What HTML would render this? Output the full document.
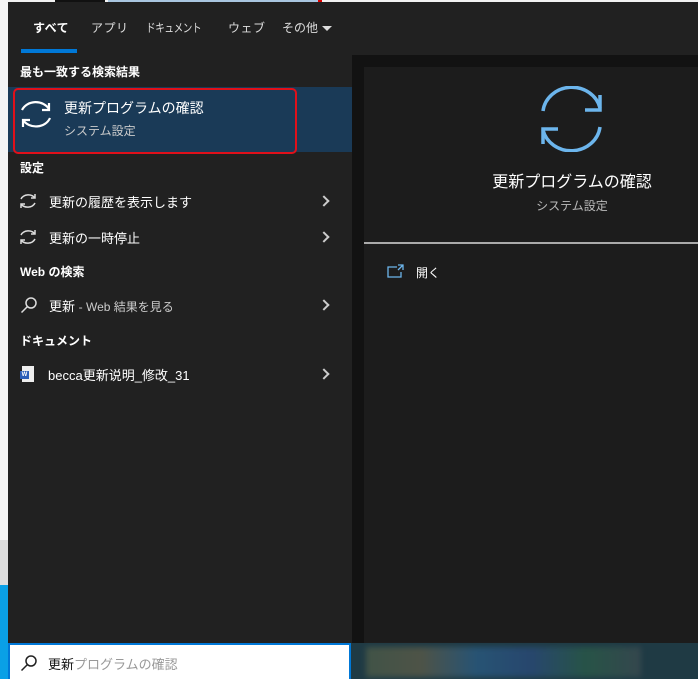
<!DOCTYPE html>
<html><head><meta charset="utf-8"><style>
*{margin:0;padding:0;box-sizing:border-box}
body{width:698px;height:679px;position:relative;overflow:hidden;background:#f2f2f2;font-family:"Liberation Sans","Noto Sans CJK JP",sans-serif;color:#fff}
.a{position:absolute}
.t{font-size:12px;color:#ddd}
.hd{font-size:12px;font-weight:bold;color:#fff}
.it{font-size:13px;color:#fff}
.chev{position:absolute;left:320px;width:8px;height:8px;border-right:2px solid #ccc;border-top:2px solid #ccc;transform:rotate(45deg)}
</style></head><body>
<div class="a" style="left:0;top:0;width:8px;height:679px;background:#f4f4f4"></div>
<div class="a" style="left:0;top:540px;width:8px;height:45px;background:#ddd"></div>
<div class="a" style="left:0;top:585px;width:8px;height:94px;background:#0aa0e6"></div>
<div class="a" style="left:55px;top:0;width:50px;height:3px;background:#111"></div>
<div class="a" style="left:108px;top:0;width:210px;height:3px;background:#a9c6e0"></div>
<div class="a" style="left:318px;top:0;width:4px;height:3px;background:#d00"></div>
<div class="a" style="left:8px;top:2px;width:690px;height:641px;background:#212121"></div>
<div class="a" style="left:352px;top:55px;width:346px;height:588px;background:#121212"></div>
<div class="a" style="left:364px;top:67px;width:334px;height:576px;background:#1c1c1c"></div>
<!-- tabs -->
<div class="a t" style="left:33px;top:19px;color:#fff;font-weight:bold;letter-spacing:0.5px">すべて</div>
<div class="a t" style="left:91px;top:19px;letter-spacing:0.5px">アプリ</div>
<div class="a t" style="left:146px;top:19px;letter-spacing:-0.5px;transform:scaleX(0.8);transform-origin:left">ドキュメント</div>
<div class="a t" style="left:146px;top:19px;letter-spacing:-0.3px;display:none">ドキュメント</div>
<div class="a t" style="left:228px;top:19px;letter-spacing:0.5px">ウェブ</div>
<div class="a t" style="left:282px;top:19px">その他</div>
<div class="a" style="left:322px;top:26px;border-left:5px solid transparent;border-right:5px solid transparent;border-top:5px solid #ddd"></div>
<div class="a" style="left:21px;top:49px;width:56px;height:4px;background:#0078d7"></div>
<div class="a hd" style="left:20px;top:63px">最も一致する検索結果</div>
<div class="a" style="left:8px;top:87px;width:344px;height:65px;background:#1a3a57"></div>
<div class="a" style="left:13px;top:88px;width:284px;height:66px;border:2px solid #e0101a;border-radius:5px"></div>
<svg class="a" style="left:19px;top:98px" width="34" height="34" viewBox="0 0 34 34" fill="none" stroke="#fff" stroke-width="2.2"><path d="M3 12 A15 13 0 0 1 30 11"/><path d="M31 20 A15 13 0 0 1 4 22"/><path d="M30 5 V12 H23" /><path d="M4 29 V22 H11"/></svg>
<div class="a" style="left:64px;top:98px;font-size:14px">更新プログラムの確認</div>
<div class="a" style="left:64px;top:122px;font-size:12px;color:#ccc">システム設定</div>
<div class="a hd" style="left:20px;top:159px">設定</div>
<svg class="a" style="left:19px;top:192px" width="18" height="18" viewBox="0 0 18 18" fill="none" stroke="#ddd" stroke-width="1.5"><path d="M2 7 A8 7 0 0 1 16 6"/><path d="M16 11 A8 7 0 0 1 2 12"/><path d="M16 2 V6 H12"/><path d="M2 16 V12 H6"/></svg>
<div class="a it" style="left:49px;top:192px">更新の履歴を表示します</div>
<div class="chev" style="top:197px"></div>
<svg class="a" style="left:19px;top:228px" width="18" height="18" viewBox="0 0 18 18" fill="none" stroke="#ddd" stroke-width="1.5"><path d="M2 7 A8 7 0 0 1 16 6"/><path d="M16 11 A8 7 0 0 1 2 12"/><path d="M16 2 V6 H12"/><path d="M2 16 V12 H6"/></svg>
<div class="a it" style="left:49px;top:228px">更新の一時停止</div>
<div class="chev" style="top:233px"></div>
<div class="a hd" style="left:20px;top:263px">Web の検索</div>
<svg class="a" style="left:20px;top:296px" width="18" height="18" viewBox="0 0 18 18" fill="none" stroke="#ddd" stroke-width="1.5"><circle cx="11" cy="7" r="5"/><path d="M7.5 10.5 L1.5 16.5"/></svg>
<div class="a it" style="left:49px;top:296px">更新 <span style="font-size:12px;color:#ccc">- Web 結果を見る</span></div>
<div class="chev" style="top:301px"></div>
<div class="a hd" style="left:20px;top:332px">ドキュメント</div>
<div class="a" style="left:22px;top:366px;width:12px;height:16px;background:#eee"></div>
<div class="a" style="left:20px;top:371px;width:9px;height:8px;background:#2b5eb8;font-size:6px;line-height:8px;text-align:center;font-weight:bold">W</div>
<div class="a it" style="left:48px;top:365px">becca更新说明_修改_31</div>
<div class="chev" style="top:370px"></div>
<!-- right -->
<svg class="a" style="left:538px;top:86px" width="68" height="66" viewBox="0 0 68 66" fill="none" stroke="#6cb5ec" stroke-width="3.5"><path d="M5 25 A29 27 0 0 1 62 22"/><path d="M62 41 A29 27 0 0 1 5 44"/><path d="M62 9 V24 H47"/><path d="M5 58 V43 H20"/></svg>
<div class="a" style="left:472px;top:168px;width:200px;text-align:center;font-size:16px">更新プログラムの確認</div>
<div class="a" style="left:472px;top:197px;width:200px;text-align:center;font-size:12px;color:#bbb">システム設定</div>
<div class="a" style="left:364px;top:242px;width:334px;height:2px;background:#aaa"></div>
<svg class="a" style="left:387px;top:264px" width="18" height="14" viewBox="0 0 18 14" fill="none" stroke="#6cb5ec" stroke-width="1.3"><path d="M10 3 H1 V13 H14 V8"/><path d="M11 1 H16 V6 M16 1 L11 6"/></svg>
<div class="a" style="left:416px;top:264px;font-size:12px">開く</div>
<!-- taskbar -->
<div class="a" style="left:350px;top:643px;width:348px;height:36px;background:#1f3a44"></div>
<div class="a" style="left:366px;top:647px;width:275px;height:30px;background:linear-gradient(90deg,#4a5a48,#5a5a48,#2a5a80,#2a4a78,#2a5a48,#3a4a50);filter:blur(3px);opacity:.8"></div>
<div class="a" style="left:8px;top:643px;width:343px;height:36px;background:#fff;border:2px solid #0078d7;border-bottom:none"></div>
<svg class="a" style="left:20px;top:654px" width="18" height="18" viewBox="0 0 18 18" fill="none" stroke="#222" stroke-width="1.5"><circle cx="11" cy="7" r="5"/><path d="M7.5 10.5 L1.5 16.5"/></svg>
<div class="a" style="left:48px;top:654px;font-size:13px;color:#111">更新<span style="color:#999">プログラムの確認</span></div>
</body></html>
